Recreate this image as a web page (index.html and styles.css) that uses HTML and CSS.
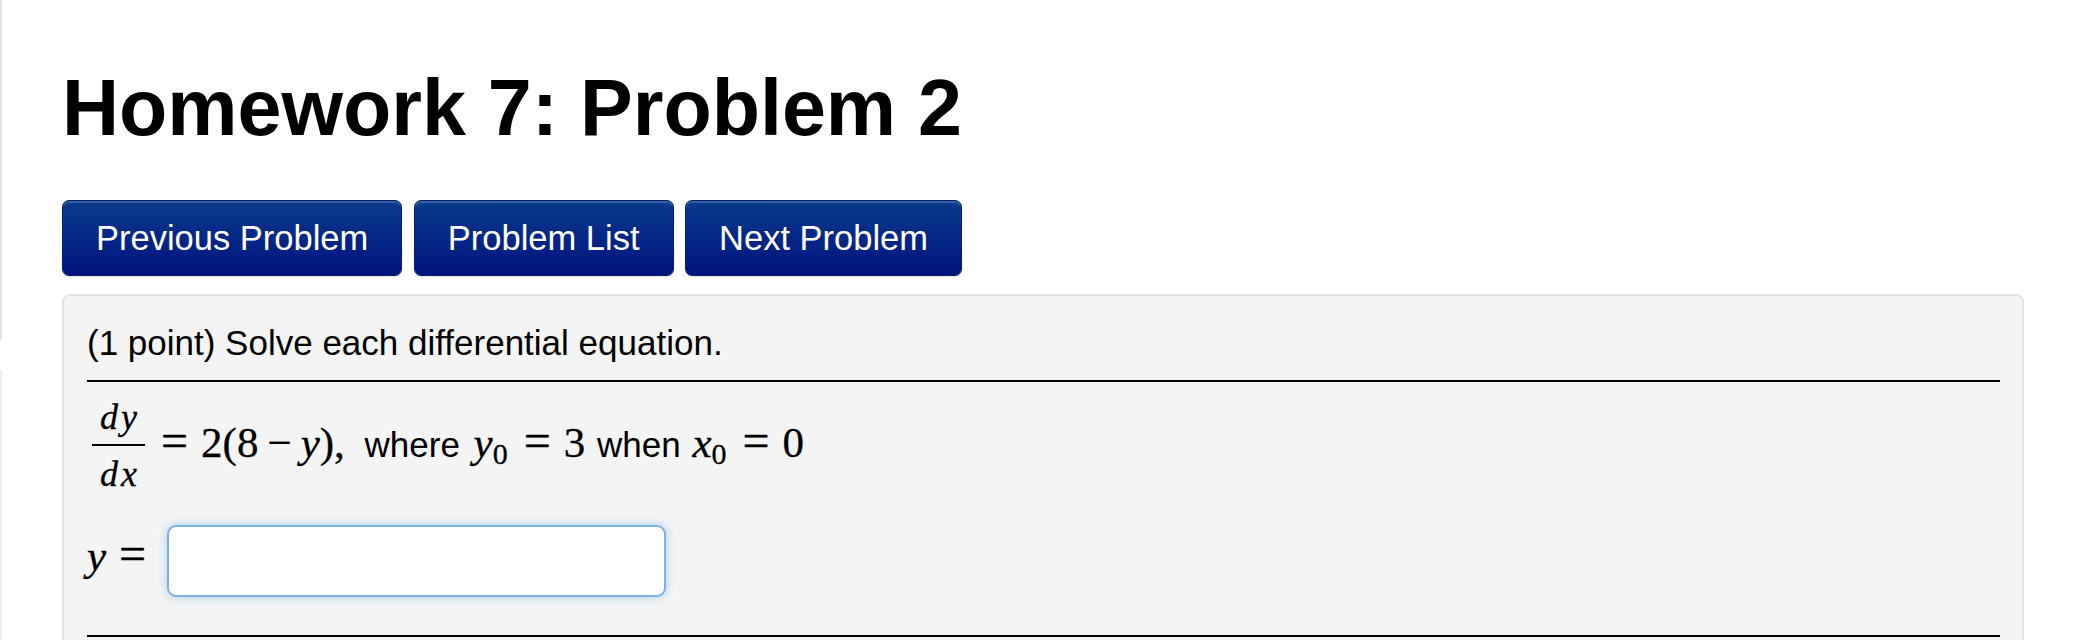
FILE: index.html
```html
<!DOCTYPE html>
<html lang="en">
<head>
    <meta charset="UTF-8">
    <meta name="viewport" content="width=device-width, initial-scale=1.0">
    <title>Homework 7: Problem 2</title>
    <link rel="stylesheet" href="styles.css">
</head>
<body>
    <div class="rail">
        <div class="rail-top"></div>
        <div class="rail-bottom"></div>
    </div>
    <div class="main">
        <h1 class="title">Homework 7: Problem 2</h1>
        <div class="nav">
            <button class="btn">Previous Problem</button>
            <button class="btn">Problem List</button>
            <button class="btn">Next Problem</button>
        </div>
        <div class="panel">
            <p class="prompt">(1 point) Solve each differential equation.</p>
            <hr class="rule">
            <div class="equation">
                <span class="frac">
                    <span class="frac-part"><i>dy</i></span>
                    <span class="frac-bar"></span>
                    <span class="frac-part"><i>dx</i></span>
                </span>
                <span class="eq-rest">
                    <span class="math math-first"><span class="eq">=</span>2(8<span class="minus">&minus;</span><i>y</i>),</span>
                    where
                    <span class="math math-mid"><i>y</i><span class="sub">0</span><span class="eq">=</span>3</span>
                    when
                    <span class="math math-last"><i>x</i><span class="sub">0</span><span class="eq">=</span>0</span>
                </span>
            </div>
            <div class="answer">
                <span class="answer-label math"><i>y</i><span class="eq eq-tight">=</span></span>
                <input type="text" class="answer-box">
            </div>
            <hr class="rule rule-bottom">
        </div>
    </div>
</body>
</html>
```

FILE: styles.css
```css
body {
    margin: 0;
    font-family: "Liberation Sans", Arial, Helvetica, sans-serif;
    background: #fff;
    color: #000;
    display: flex;
    min-height: 100vh;
    overflow: hidden;
}
.rail {
    width: 2px;
    display: flex;
    flex-direction: column;
    gap: 30px;
}
.rail-top {
    height: 340px;
    background: #e4e4e4;
}
.rail-bottom {
    flex: 1;
    background: #eeeeee;
}
.main {
    flex: 1;
    padding: 0 56px 0 60px;
}
.title {
    margin: 64px 0 0;
    font-size: 79px;
    line-height: 88px;
    font-weight: bold;
}
.nav {
    display: flex;
    gap: 11.5px;
    margin-top: 48px;
}
.btn {
    height: 76px;
    padding: 0 33px;
    border: 1px solid #0a2463;
    border-radius: 7px;
    background: linear-gradient(#0a3b8d, #00137e);
    color: #fff;
    font-family: "Liberation Sans", Arial, sans-serif;
    font-size: 34.5px;
    box-shadow: inset 0 2px 0 rgba(255, 255, 255, 0.18), 0 1px 2px rgba(0, 0, 0, 0.15);
}
.panel {
    margin-top: 18px;
    border: 2px solid #e3e3e3;
    border-radius: 8px;
    background: #f4f4f4;
    padding: 27px 22px 60px 23px;
}
.prompt {
    margin: 0;
    font-size: 35px;
    line-height: 40px;
}
.rule {
    border: 0;
    border-top: 2px solid #000;
    margin: 17px 0 0;
}
.rule-bottom {
    margin-top: 38px;
}

/* math */
.math,
.frac {
    font-family: "Liberation Serif", "Times New Roman", serif;
    -webkit-text-stroke: 0.3px #000;
}
.math {
    font-size: 43px;
}
.math-first {
    margin: 0 10px 0 0;
}
.math-mid {
    margin: 0 2px 0 4px;
}
.math-last {
    margin: 0 0 0 2px;
}
.equation {
    display: flex;
    align-items: center;
    margin-top: 17.5px;
}
.frac {
    display: flex;
    flex-direction: column;
    align-items: center;
    margin-left: 5px;
}
.frac-part {
    font-size: 36px;
    line-height: 34px;
    letter-spacing: 3px;
    padding: 0 5px 0 8px;
}
.frac-bar {
    align-self: stretch;
    height: 2px;
    background: #000;
    margin: 10.5px 0;
}
.eq-rest {
    font-size: 35px;
    line-height: 44px;
    padding-bottom: 4px;
    white-space: nowrap;
}
.eq {
    font-size: 48px;
    margin: 0 13px 0 16px;
}
.eq-tight {
    margin: 0 0 0 13px;
}
.minus {
    margin: 0 9px;
}
.sub {
    font-size: 30px;
    vertical-align: -7px;
    line-height: 0;
}
.answer {
    display: flex;
    align-items: center;
    margin-top: 34.5px;
}
.answer-label {
    line-height: 44px;
    padding-bottom: 13px;
}
.answer-box {
    width: 499px;
    height: 72px;
    box-sizing: border-box;
    margin: 0 0 0 21px;
    border: 2px solid #7db2e8;
    border-radius: 9px;
    background: #fff;
    box-shadow: 0 0 10px rgba(102, 175, 233, 0.55);
    outline: none;
}
```
